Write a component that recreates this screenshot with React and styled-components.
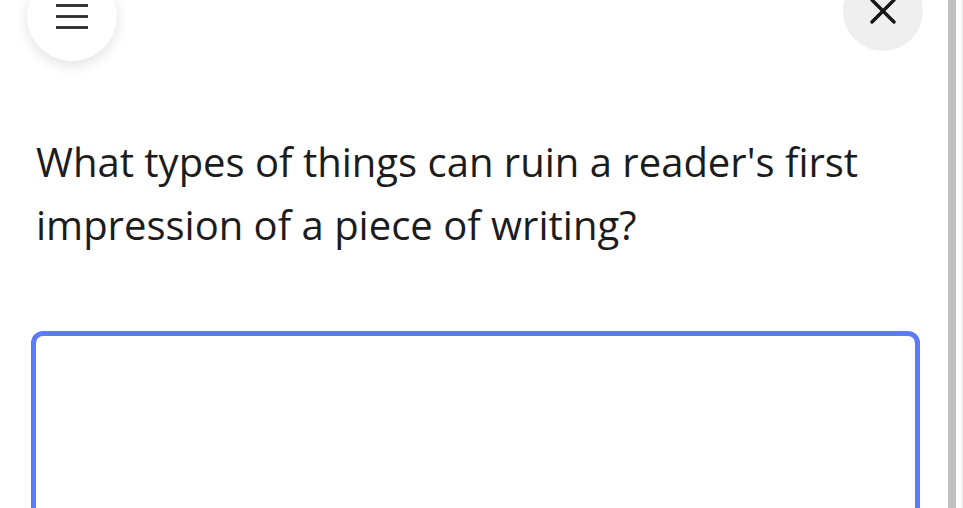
import React from "react";
import styled, { createGlobalStyle } from "styled-components";

const Global = createGlobalStyle`
  html, body {
    margin: 0;
    padding: 0;
    background: #ffffff;
    overflow: hidden;
  }
  body {
    font-family: "Open Sans", "Noto Sans", sans-serif;
  }
`;

const Page = styled.div`
  display: flex;
  height: 508px;
  width: 963px;
  overflow: hidden;
`;

const Content = styled.div`
  width: 948px;
  padding: 0 28px 0 31px;
  box-sizing: border-box;
`;

const Header = styled.div`
  display: flex;
  justify-content: space-between;
  align-items: flex-start;
  margin: -29px -3px 0 -4px;
`;

const RoundButton = styled.button`
  display: flex;
  align-items: center;
  justify-content: center;
  width: ${(p) => p.size}px;
  height: ${(p) => p.size}px;
  border-radius: 50%;
  border: none;
  padding: 0;
  background: ${(p) => (p.light ? "#ffffff" : "#efefef")};
  box-shadow: ${(p) =>
    p.light ? "0 4px 14px rgba(0, 0, 0, 0.12)" : "none"};
  color: #222;
  cursor: pointer;
`;

const Question = styled.h2`
  margin: 69px 0 0 0;
  padding-left: 5px;
  font-size: 40px;
  line-height: 63px;
  font-weight: 400;
  color: #1c1c1c;
  letter-spacing: 0;
`;

const Answer = styled.textarea`
  display: block;
  margin-top: 75px;
  width: 100%;
  height: 260px;
  box-sizing: border-box;
  border: 5px solid #5b7bfa;
  border-radius: 12px;
  outline: none;
  resize: none;
  font-family: inherit;
  font-size: 20px;
`;

const ScrollThumb = styled.div`
  width: 8px;
  height: 100%;
  background: #bfbfbf;
`;

const ScrollTrack = styled.div`
  flex: 1;
  height: 100%;
  background: #ffffff;
  border-right: 2px solid #f0f0f0;
`;

const MenuIcon = () => (
  <svg width="32" height="25" viewBox="0 0 32 25">
    <g stroke="#2a2a2a" strokeWidth="2.8">
      <line x1="0" y1="1.5" x2="32" y2="1.5" />
      <line x1="0" y1="12.5" x2="32" y2="12.5" />
      <line x1="0" y1="23.5" x2="32" y2="23.5" />
    </g>
  </svg>
);

const CloseIcon = () => (
  <svg width="26" height="26" viewBox="0 0 26 26">
    <g stroke="#161616" strokeWidth="3.4" strokeLinecap="round">
      <line x1="2" y1="2" x2="24" y2="24" />
      <line x1="24" y1="2" x2="2" y2="24" />
    </g>
  </svg>
);

export default function App() {
  return (
    <Page>
      <Global />
      <Content>
        <Header>
          <RoundButton light size={90} aria-label="Menu">
            <MenuIcon />
          </RoundButton>
          <RoundButton size={80} aria-label="Close">
            <CloseIcon />
          </RoundButton>
        </Header>
        <Question>
          What types of things can ruin a reader's first impression of a piece of
          writing?
        </Question>
        <Answer />
      </Content>
      <ScrollThumb />
      <ScrollTrack />
    </Page>
  );
}
